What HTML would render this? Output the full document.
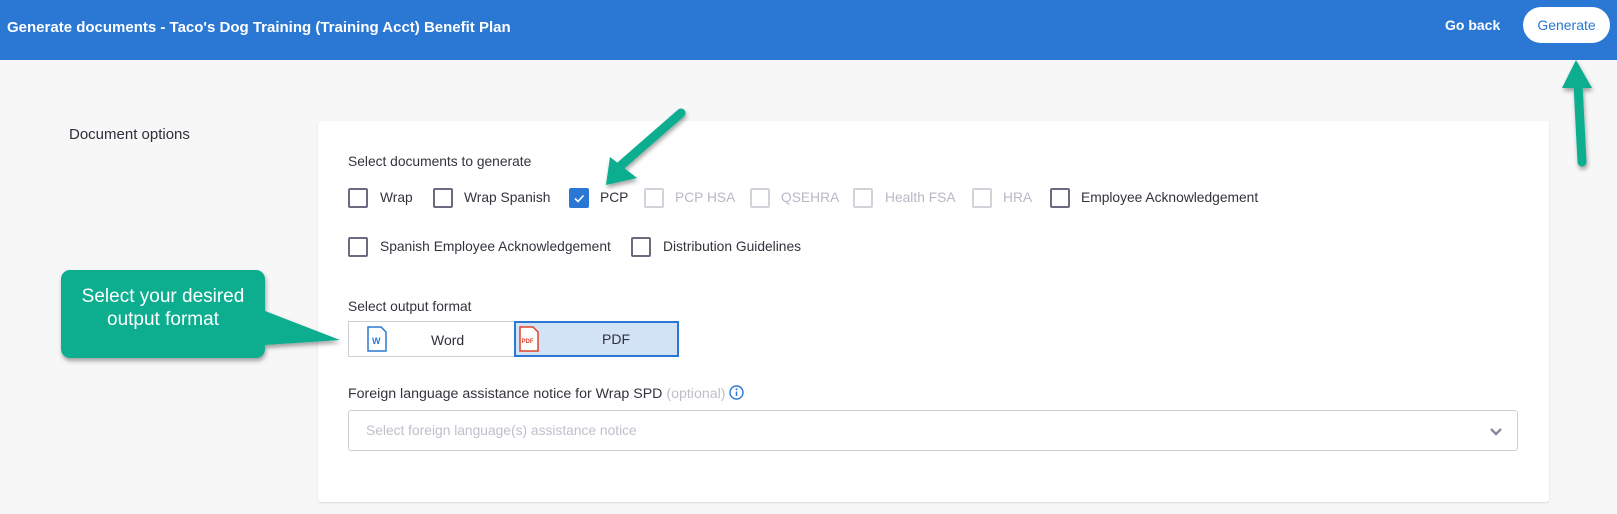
<!DOCTYPE html>
<html><head><meta charset="utf-8"><style>
*{margin:0;padding:0;box-sizing:border-box}
body{width:1617px;height:514px;background:#f7f7f7;font-family:"Liberation Sans",sans-serif;position:relative;overflow:hidden;color:#2f2f3a}
.hdr{position:absolute;left:0;top:0;width:1617px;height:60px;background:#2a78d4}
.title{position:absolute;left:7px;top:19px;color:#fff;font-weight:bold;font-size:15px;white-space:nowrap}
.goback{position:absolute;left:1445px;top:17px;color:#fff;font-weight:bold;font-size:14px}
.gen{position:absolute;left:1523px;top:7px;width:87px;height:36px;border-radius:18px;background:#fff;color:#2a78d4;font-size:14px;text-align:center;line-height:36px}
.abs{position:absolute;white-space:nowrap}
.card{position:absolute;left:318px;top:121px;width:1231px;height:381px;background:#fff;border-radius:3px;box-shadow:0 1px 2px rgba(0,0,0,.12)}
.cb{position:absolute;width:20px;height:20px;border:2px solid #6b6a80;border-radius:2px}
.cb.d{border-color:#d3d2da}
.lb{position:absolute;font-size:13.8px;color:#33333d;white-space:nowrap}
.lb.d{color:#b9b8c4}
.btn{position:absolute;top:321px;height:36px;font-size:14px;line-height:36px}
</style></head><body>
<div class="hdr"></div>
<div class="title">Generate documents - Taco's Dog Training (Training Acct) Benefit Plan</div>
<div class="goback">Go back</div>
<div class="gen">Generate</div>
<div class="abs" style="left:69px;top:126px;font-size:15px;color:#2f2f3a">Document options</div>
<div class="card"></div>
<div class="lb" style="left:348px;top:154px">Select documents to generate</div>

<div class="cb" style="left:348px;top:188px"></div><div class="lb" style="left:380px;top:190px">Wrap</div>
<div class="cb" style="left:433px;top:188px"></div><div class="lb" style="left:464px;top:190px">Wrap Spanish</div>
<div class="cb" style="left:569px;top:188px;background:#2a78d4;border-color:#2a78d4"><svg width="16" height="16" viewBox="0 0 16 16" style="position:absolute;left:0;top:0"><path d="M4 8.5l3 3 5.5-6" stroke="#fff" stroke-width="1.6" fill="none"/></svg></div><div class="lb" style="left:600px;top:190px">PCP</div>
<div class="cb d" style="left:644px;top:188px"></div><div class="lb d" style="left:675px;top:190px">PCP HSA</div>
<div class="cb d" style="left:750px;top:188px"></div><div class="lb d" style="left:781px;top:190px">QSEHRA</div>
<div class="cb d" style="left:853px;top:188px"></div><div class="lb d" style="left:885px;top:190px">Health FSA</div>
<div class="cb d" style="left:972px;top:188px"></div><div class="lb d" style="left:1003px;top:190px">HRA</div>
<div class="cb" style="left:1050px;top:188px"></div><div class="lb" style="left:1081px;top:190px">Employee Acknowledgement</div>

<div class="cb" style="left:348px;top:237px"></div><div class="lb" style="left:380px;top:239px">Spanish Employee Acknowledgement</div>
<div class="cb" style="left:631px;top:237px"></div><div class="lb" style="left:663px;top:239px">Distribution Guidelines</div>

<div class="lb" style="left:348px;top:299px">Select output format</div>
<div class="btn" style="left:348px;width:166px;border:1px solid #cfcfd6;border-right:none;background:#fff">
 <svg width="20" height="26" viewBox="0 0 20 26" style="position:absolute;left:18px;top:4px"><path d="M1 1h13l5 5v19H1z" fill="#fff" stroke="#2a78d4" stroke-width="1.5"/><text x="5" y="18" font-size="9" font-weight="bold" fill="#2a78d4" font-family="Liberation Sans">W</text></svg>
 <span style="position:absolute;left:82px">Word</span></div>
<div class="btn" style="left:514px;width:165px;border:2px solid #2a78d4;background:#d3e3f6;line-height:32px">
 <svg width="20" height="26" viewBox="0 0 20 26" style="position:absolute;left:3px;top:3px"><path d="M1 1h13l5 5v19H1z" fill="#fff" stroke="#e0432c" stroke-width="1.5"/><text x="2.5" y="17" font-size="6" font-weight="bold" fill="#e0432c" font-family="Liberation Sans">PDF</text></svg>
 <span style="position:absolute;left:86px">PDF</span></div>

<div class="lb" style="left:348px;top:385px;font-size:14.2px">Foreign language assistance notice for Wrap SPD <span style="color:#c0bfca">(optional)</span><svg width="15" height="15" viewBox="0 0 15 15" style="vertical-align:-2px;margin-left:3px"><circle cx="7.5" cy="7.5" r="6.5" fill="none" stroke="#2a78d4" stroke-width="1.4"/><circle cx="7.5" cy="4.3" r="1" fill="#2a78d4"/><path d="M7.5 6.5v4.5" stroke="#2a78d4" stroke-width="1.5"/></svg></div>
<div class="abs" style="left:348px;top:410px;width:1170px;height:41px;border:1px solid #cfcfd6;border-radius:3px"></div>
<div class="lb d" style="left:366px;top:423px;color:#c0bfca">Select foreign language(s) assistance notice</div>
<svg width="14" height="10" viewBox="0 0 14 10" style="position:absolute;left:1489px;top:427px"><path d="M2 2l5 5 5-5" stroke="#8a899c" stroke-width="2.4" fill="none"/></svg>

<svg width="1617" height="514" style="position:absolute;left:0;top:0">
 <defs><filter id="s" x="-20%" y="-20%" width="140%" height="140%"><feDropShadow dx="1" dy="3" stdDeviation="2" flood-opacity="0.35"/></filter></defs>
 <g filter="url(#s)">
  <path d="M70 270h186a9 9 0 0 1 9 9v32l75 29-75 5v4a9 9 0 0 1-9 9H70a9 9 0 0 1-9-9V279a9 9 0 0 1 9-9z" fill="#07ae8f"/>
  <path d="M681 113L618 168" stroke="#07ae8f" stroke-width="9" stroke-linecap="round"/>
  <path d="M606 185L610 157L637 178z" fill="#07ae8f"/>
  <path d="M1582 162L1578 84" stroke="#07ae8f" stroke-width="9" stroke-linecap="round"/>
  <path d="M1576 60L1562 88L1592 88z" fill="#07ae8f"/>
 </g>
 <text x="163" y="302" text-anchor="middle" fill="#fff" font-size="19" font-family="Liberation Sans">Select your desired</text>
 <text x="163" y="325" text-anchor="middle" fill="#fff" font-size="19" font-family="Liberation Sans">output format</text>
</svg>
</body></html>
